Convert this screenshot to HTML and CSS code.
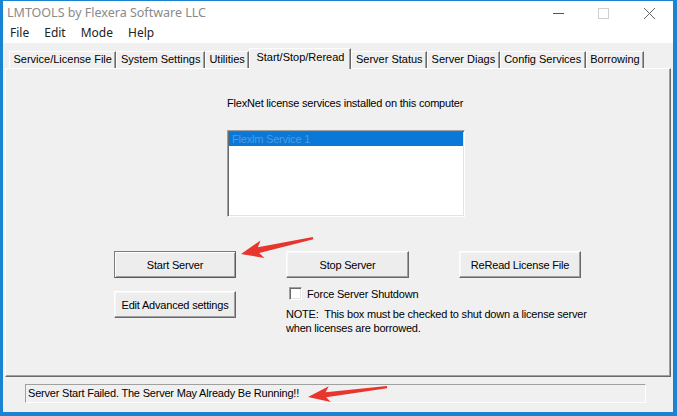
FILE: index.html
```html
<!DOCTYPE html>
<html>
<head>
<meta charset="utf-8">
<title>LMTOOLS</title>
<link rel="stylesheet" href="styles.css">
</head>
<body>
<div class="window">
  <div class="titlebar">
    <span class="title">LMTOOLS by Flexera Software LLC</span>
    <div class="controls">
      <svg class="ctl" width="46" height="21" viewBox="0 0 46 21"><line x1="18" y1="12.5" x2="29" y2="12.5" stroke="#555" stroke-width="1"/></svg>
      <svg class="ctl" width="46" height="21" viewBox="0 0 46 21"><rect x="17.5" y="7.5" width="10" height="10" fill="none" stroke="#cfcfcf" stroke-width="1"/></svg>
      <svg class="ctl" width="46" height="21" viewBox="0 0 46 21"><path d="M17 7 L28 18 M28 7 L17 18" stroke="#666" stroke-width="1" fill="none"/></svg>
    </div>
  </div>
  <div class="menubar">
    <span class="menu-item">File</span>
    <span class="menu-item">Edit</span>
    <span class="menu-item">Mode</span>
    <span class="menu-item">Help</span>
  </div>
  <div class="tabstrip">
    <div class="tab">Service/License File</div>
    <div class="tab">System Settings</div>
    <div class="tab">Utilities</div>
    <div class="tab active">Start/Stop/Reread</div>
    <div class="tab">Server Status</div>
    <div class="tab">Server Diags</div>
    <div class="tab">Config Services</div>
    <div class="tab">Borrowing</div>
  </div>
  <div class="panel">
    <div class="services">
      <div class="services-label">FlexNet license services installed on this computer</div>
      <div class="listbox">
        <div class="list-item selected">Flexlm Service 1</div>
      </div>
    </div>
    <div class="actions">
      <button class="btn default">Start Server</button>
      <button class="btn">Stop Server</button>
      <button class="btn">ReRead License File</button>
      <div class="cell-left">
        <button class="btn">Edit Advanced settings</button>
      </div>
      <div class="cell-note">
        <label class="check"><span class="checkbox"></span>Force Server Shutdown</label>
        <p class="note">NOTE:&nbsp; This box must be checked to shut down a license server<br>when licenses are borrowed.</p>
      </div>
    </div>
  </div>
  <div class="statusbar">
    <div class="status-box">Server Start Failed. The Server May Already Be Running!!</div>
  </div>
</div>
<svg class="annotations" width="677" height="416" viewBox="0 0 677 416">
  <polygon fill="#e8352d" points="241,254 260.5,240.4 257.9,247.2 312.8,237 313.4,239.2 259.2,253 264.5,258"/>
  <polygon fill="#e8352d" points="308,397 328.8,386.3 325.6,392.2 386.9,386 387.2,388.2 326.2,397.2 330.8,402.1"/>
</svg>
</body>
</html>
```

FILE: styles.css
```css
* { box-sizing: border-box; }

html, body {
  margin: 0;
  padding: 0;
}

body {
  width: 677px;
  height: 416px;
  background: #1a84d2;
  position: relative;
  overflow: hidden;
  padding: 1px 4px 4px 3px;
}

.window {
  width: 670px;
  height: 411px;
  background: #f0f0f0;
  display: flex;
  flex-direction: column;
}

.titlebar {
  height: 21px;
  background: #fff;
  display: flex;
  align-items: center;
  justify-content: space-between;
  padding-left: 4px;
}

.title {
  font-family: "Noto Sans", "Open Sans", sans-serif;
  font-size: 12.5px;
  color: #8a8a8a;
  line-height: 21px;
  padding-top: 1px;
}

.controls {
  display: flex;
  align-self: flex-start;
}

.ctl { display: block; }

.menubar {
  height: 21px;
  background: #fff;
  display: flex;
  align-items: center;
  gap: 15px;
  padding-left: 7px;
  font-family: "Noto Sans", "Open Sans", sans-serif;
  font-size: 12px;
  color: #222;
}

.tabstrip {
  height: 25px;
  display: flex;
  align-items: flex-end;
  padding-left: 6px;
  font-family: "Liberation Sans", Arial, sans-serif;
  font-size: 11px;
  color: #000;
}

.tab {
  height: 17px;
  line-height: 15px;
  padding: 0 3.5px;
  border-top: 1px solid #fff;
  border-left: 1px solid #fff;
  border-right: 1px solid #696969;
  box-shadow: inset -1px 0 0 #a0a0a0;
  white-space: nowrap;
}

.tab.active {
  height: 21px;
  line-height: 17px;
  padding: 0 6px;
  margin-bottom: -1px;
  background: #f0f0f0;
  position: relative;
  z-index: 1;
}

.panel {
  height: 309px;
  margin-left: 2px;
  width: 666px;
  border-top: 1px solid #fff;
  border-left: 1px solid #fff;
  border-right: 1px solid #696969;
  border-bottom: 1px solid #696969;
  box-shadow: inset -1px -1px 0 #a0a0a0;
  padding-top: 27px;
  font-family: "Liberation Sans", Arial, sans-serif;
  font-size: 11px;
  letter-spacing: -0.2px;
  color: #000;
}

.services {
  margin-left: 221px;
  width: 238px;
}

.services-label {
  line-height: 14px;
  height: 14px;
  white-space: nowrap;
}

.listbox {
  margin-top: 20px;
  height: 87px;
  background: #fff;
  border: 1px solid;
  border-color: #a0a0a0 #fff #fff #a0a0a0;
  box-shadow: inset 1px 1px 0 #696969, inset -1px -1px 0 #e3e3e3;
  padding: 1px 1px 0 1px;
}

.list-item {
  height: 14px;
  line-height: 14px;
  padding-left: 3px;
}

.list-item.selected {
  background: #0a78d7;
  color: #4f9be0;
}

.actions {
  margin-top: 34px;
  padding-left: 108px;
  display: grid;
  grid-template-columns: 122px 123px 122px;
  column-gap: 50px;
  row-gap: 9px;
}

.btn {
  height: 27px;
  font-family: "Liberation Sans", Arial, sans-serif;
  font-size: 11px;
  letter-spacing: -0.2px;
  color: #000;
  background: #ededed;
  border: 1px solid;
  border-color: #fff #696969 #696969 #fff;
  box-shadow: inset -1px -1px 0 #a0a0a0, inset 1px 1px 0 #f7f7f7;
  padding: 0;
  margin: 0;
}

.btn.default {
  border-color: #7a7a7a #5a5a5a #5a5a5a #7a7a7a;
  box-shadow: inset 1px 1px 0 #fff, inset -1px -1px 0 #a0a0a0;
}

.cell-left .btn {
  width: 122px;
  margin-top: 4px;
}

.cell-note {
  grid-column: 2 / 4;
}

.check {
  display: flex;
  align-items: center;
  height: 13px;
  padding-left: 3px;
  gap: 5px;
}

.checkbox {
  width: 13px;
  height: 13px;
  background: #fff;
  border: 1px solid;
  border-color: #a0a0a0 #fff #fff #a0a0a0;
  box-shadow: inset 1px 1px 0 #696969, inset -1px -1px 0 #e3e3e3;
}

.note {
  margin: 7px 0 0 0;
  line-height: 14px;
  white-space: nowrap;
}

.statusbar {
  margin-top: 7px;
  padding-left: 22px;
}

.status-box {
  width: 621px;
  height: 19px;
  line-height: 17px;
  padding-left: 2px;
  border: 1px solid;
  border-color: #a0a0a0 #fff #fff #a0a0a0;
  font-family: "Liberation Sans", Arial, sans-serif;
  font-size: 11px;
  letter-spacing: -0.2px;
  color: #000;
  white-space: nowrap;
}

.annotations {
  position: absolute;
  left: 0;
  top: 0;
  pointer-events: none;
}
```
